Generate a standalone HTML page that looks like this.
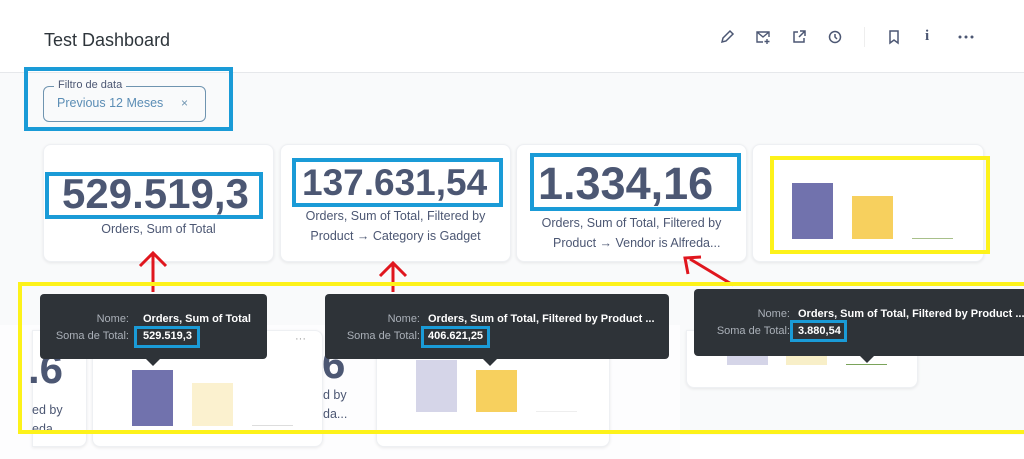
<!DOCTYPE html>
<html><head><meta charset="utf-8"><style>
*{margin:0;padding:0;box-sizing:border-box}
body{width:1024px;height:459px;overflow:hidden;background:#fff;font-family:"Liberation Sans",sans-serif;position:relative;color:#4c5773}
.a{position:absolute}
.card{position:absolute;background:#fff;border-radius:8px;box-shadow:0 1px 3px rgba(0,0,0,.08);border:1px solid #eef0f3}
.big{position:absolute;font-weight:bold;color:#4c5773;letter-spacing:0px;text-align:center;white-space:nowrap}
.lbl{position:absolute;font-size:12.5px;color:#4c5773;text-align:center;line-height:20px;width:100%}
.bl{position:absolute;border:4px solid #1a9bd7}
.yl{position:absolute;border:4px solid #fdf21a}
.tip{position:absolute;background:#2e3338;border-radius:4px;color:#fff;font-size:11px}
.tip .k{position:absolute;color:#aab0b8;text-align:right}
.tip .v{position:absolute;font-weight:bold;white-space:nowrap}
.tip .bv{position:absolute;border:3px solid #1a9bd7}
.ic{position:absolute;top:28px}
</style></head><body>
<div class="a" style="left:0;top:72px;width:1024px;height:253px;background:#f9fafb;border-top:1px solid #e6e8eb"></div>
<div class="a" style="left:0;top:325px;width:680px;height:134px;background:#fdfdfe"></div>
<div class="a" style="left:680px;top:325px;width:344px;height:110px;background:#f9fafb"></div>
<div class="a" style="left:44px;top:30px;font-size:18px;color:#2e353b">Test Dashboard</div>
<svg class="ic" style="left:718px" width="18" height="18" viewBox="0 0 18 18" fill="none" stroke="#4c5773" stroke-width="1.5"><path d="M4 14l1-4 7-7 3 3-7 7z"/></svg>
<svg class="ic" style="left:754px" width="18" height="18" viewBox="0 0 18 18" fill="none" stroke="#4c5773" stroke-width="1.4"><path d="M9 14H3V4h12v5M3 4l6 5 6-5M13 11v5M10.5 13.5h5"/></svg>
<svg class="ic" style="left:790px" width="18" height="18" viewBox="0 0 18 18" fill="none" stroke="#4c5773" stroke-width="1.5"><path d="M8 4H4v10h10v-4M10 3h5v5M15 3l-6 6"/></svg>
<svg class="ic" style="left:826px" width="18" height="18" viewBox="0 0 18 18" fill="none" stroke="#4c5773" stroke-width="1.5"><circle cx="9" cy="9" r="5.5"/><path d="M9 6v3l2 2"/></svg>
<div class="a" style="left:864px;top:27px;width:1px;height:20px;background:#eee"></div>
<svg class="ic" style="left:885px" width="18" height="18" viewBox="0 0 18 18" fill="none" stroke="#4c5773" stroke-width="1.5"><path d="M5 3h8v12l-4-3-4 3z"/></svg>
<div class="a" style="left:925px;top:28px;font-size:15px;font-weight:bold;font-family:'Liberation Serif',serif;color:#4c5773">i</div>
<svg class="ic" style="left:956px;top:30px" width="20" height="14" viewBox="0 0 20 14" fill="#4c5773"><circle cx="4" cy="7" r="1.5"/><circle cx="10" cy="7" r="1.5"/><circle cx="16" cy="7" r="1.5"/></svg>

<div class="bl" style="left:24px;top:67px;width:209px;height:64px"></div>
<div class="a" style="left:43px;top:86px;width:163px;height:36px;border:1.5px solid #6f94b0;border-radius:6px"></div>
<div class="a" style="left:54px;top:79px;padding:0 4px;background:#f9fafb;font-size:11px;color:#4c5773">Filtro de data</div>
<div class="a" style="left:57px;top:96px;font-size:12.5px;color:#5b8db5">Previous 12 Meses</div>
<div class="a" style="left:181px;top:96px;font-size:12px;color:#6f94b0">×</div>

<div class="card" style="left:43px;top:144px;width:231px;height:118px">
 <div class="lbl" style="top:74px">Orders, Sum of Total</div></div>
<div class="big" style="left:62px;top:170px;font-size:42px">529.519,3</div>
<div class="bl" style="left:45px;top:172px;width:218px;height:47px"></div>
<div class="card" style="left:280px;top:144px;width:231px;height:118px">
 <div class="lbl" style="top:61px">Orders, Sum of Total, Filtered by<br>Product → Category is Gadget</div></div>
<div class="big" style="left:302px;top:162px;font-size:37px">137.631,54</div>
<div class="bl" style="left:292px;top:158px;width:211px;height:49px"></div>
<div class="card" style="left:516px;top:144px;width:231px;height:118px">
 <div class="lbl" style="top:68px">Orders, Sum of Total, Filtered by<br>&nbsp;&nbsp;&nbsp;Product → Vendor is Alfreda...</div></div>
<div class="big" style="left:538px;top:158px;font-size:45px">1.334,16</div>
<div class="bl" style="left:530px;top:153px;width:211px;height:58px"></div>
<div class="card" style="left:752px;top:144px;width:232px;height:118px"></div>
<div class="yl" style="left:770px;top:156px;width:220px;height:98px"></div>
<div class="a" style="left:792px;top:183px;width:41px;height:56px;background:#7172ad"></div>
<div class="a" style="left:852px;top:196px;width:41px;height:43px;background:#f7d05e"></div>
<div class="a" style="left:912px;top:238px;width:41px;height:1px;background:#a8c08a"></div>

<svg class="a" style="left:0;top:0" width="1024" height="459"><g stroke="#e0161e" stroke-width="3" fill="none"><path d="M153 292V254M140 266l13-13 13 13"/><path d="M393 292V264M380 276l13-13 13 13"/><path d="M733 285L690 259M688 274l-3-16 16-1"/></g></svg>

<div class="card" style="left:32px;top:330px;width:55px;height:117px;border-radius:0 8px 8px 0"></div>
<div class="big" style="left:28px;top:345px;font-size:42px">.6</div>
<div class="a" style="left:32px;top:403px;font-size:12.5px">ed by</div>
<div class="a" style="left:32px;top:422px;font-size:12.5px">eda</div>
<div class="card" style="left:92px;top:330px;width:231px;height:117px"></div>
<div class="a" style="left:295px;top:333px;font-size:11px;color:#999">···</div>
<div class="a" style="left:132px;top:370px;width:41px;height:56px;background:#7172ad"></div>
<div class="a" style="left:192px;top:383px;width:41px;height:43px;background:#fbf1cf"></div>
<div class="a" style="left:252px;top:425px;width:41px;height:1px;background:#ddd"></div>
<div class="big" style="left:322px;top:340px;font-size:42px">6</div>
<div class="a" style="left:323px;top:388px;font-size:12.5px">d by</div>
<div class="a" style="left:323px;top:407px;font-size:12.5px">da...</div>
<div class="card" style="left:376px;top:330px;width:234px;height:117px;border-radius:0 0 8px 8px"></div>
<div class="a" style="left:416px;top:360px;width:41px;height:52px;background:#d5d5e8"></div>
<div class="a" style="left:476px;top:370px;width:41px;height:42px;background:#f7d05e"></div>
<div class="a" style="left:536px;top:411px;width:41px;height:1px;background:#eee"></div>
<div class="card" style="left:686px;top:330px;width:232px;height:58px;border-radius:0 0 8px 8px"></div>
<div class="a" style="left:727px;top:355px;width:41px;height:10px;background:#d5d5e8"></div>
<div class="a" style="left:786px;top:355px;width:41px;height:10px;background:#f8efc8"></div>
<div class="a" style="left:846px;top:364px;width:41px;height:1px;background:#7aa35a"></div>

<div class="tip" style="left:40px;top:294px;width:227px;height:65px">
 <div class="k" style="right:138px;top:19px">Nome:</div><div class="v" style="left:103px;top:19px">Orders, Sum of Total</div>
 <div class="k" style="right:138px;top:36px">Soma de Total:</div><div class="v" style="left:103px;top:36px">529.519,3</div>
 <div class="bv" style="left:94px;top:32px;width:66px;height:22px"></div>
 <div class="a" style="left:106px;top:65px;border:7px solid transparent;border-top-color:#2e3338;border-bottom:0"></div></div>
<div class="tip" style="left:325px;top:294px;width:344px;height:65px">
 <div class="k" style="right:249px;top:19px">Nome:</div><div class="v" style="left:103px;top:19px">Orders, Sum of Total, Filtered by Product ...</div>
 <div class="k" style="right:249px;top:36px">Soma de Total:</div><div class="v" style="left:103px;top:36px">406.621,25</div>
 <div class="bv" style="left:96px;top:32px;width:69px;height:22px"></div>
 <div class="a" style="left:158px;top:65px;border:7px solid transparent;border-top-color:#2e3338;border-bottom:0"></div></div>
<div class="tip" style="left:694px;top:289px;width:340px;height:67px">
 <div class="k" style="right:244px;top:19px">Nome:</div><div class="v" style="left:104px;top:19px">Orders, Sum of Total, Filtered by Product ...</div>
 <div class="k" style="right:244px;top:36px">Soma de Total:</div><div class="v" style="left:104px;top:36px">3.880,54</div>
 <div class="bv" style="left:96px;top:31px;width:57px;height:22px"></div>
 <div class="a" style="left:166px;top:67px;border:7px solid transparent;border-top-color:#2e3338;border-bottom:0"></div></div>

<div class="yl" style="left:18px;top:282px;width:1020px;height:152px"></div>
</body></html>
